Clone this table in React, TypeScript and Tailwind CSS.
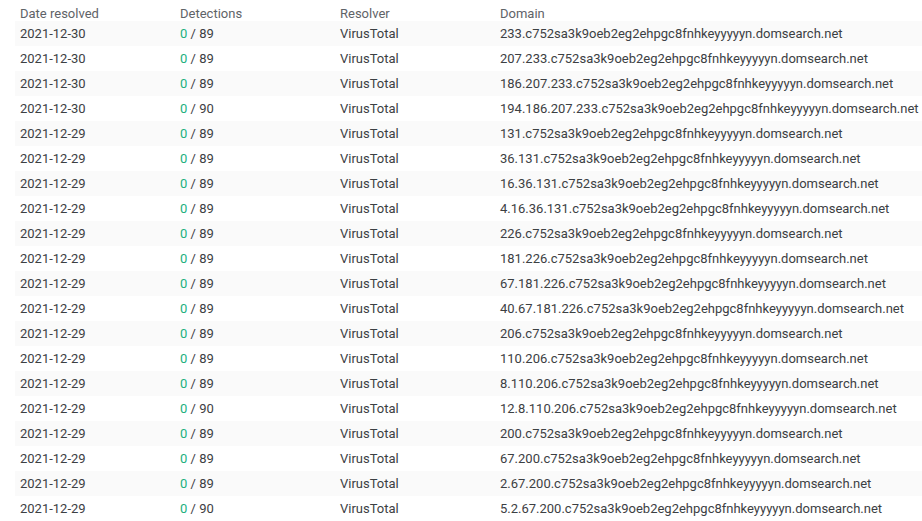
const base = "c752sa3k9oeb2eg2ehpgc8fnhkeyyyyyn.domsearch.net";

const rows: [string, number, string][] = [
  ["2021-12-30", 89, "233."],
  ["2021-12-30", 89, "207.233."],
  ["2021-12-30", 89, "186.207.233."],
  ["2021-12-30", 90, "194.186.207.233."],
  ["2021-12-29", 89, "131."],
  ["2021-12-29", 89, "36.131."],
  ["2021-12-29", 89, "16.36.131."],
  ["2021-12-29", 89, "4.16.36.131."],
  ["2021-12-29", 89, "226."],
  ["2021-12-29", 89, "181.226."],
  ["2021-12-29", 89, "67.181.226."],
  ["2021-12-29", 89, "40.67.181.226."],
  ["2021-12-29", 89, "206."],
  ["2021-12-29", 89, "110.206."],
  ["2021-12-29", 89, "8.110.206."],
  ["2021-12-29", 90, "12.8.110.206."],
  ["2021-12-29", 89, "200."],
  ["2021-12-29", 89, "67.200."],
  ["2021-12-29", 89, "2.67.200."],
  ["2021-12-29", 90, "5.2.67.200."],
];

export default function App() {
  return (
    <div className="w-[922px] h-[521px] overflow-hidden bg-white pl-[15px] font-['Roboto',sans-serif] text-[13px]">
      <div className="grid grid-cols-[160px_160px_160px_1fr] h-[21px] items-end pl-[5px] leading-[15px] text-[#5f6368]">
        <div>Date resolved</div>
        <div>Detections</div>
        <div>Resolver</div>
        <div>Domain</div>
      </div>
      {rows.map(([date, total, prefix], i) => (
        <div
          key={i}
          className={
            "grid grid-cols-[160px_160px_160px_1fr] h-[25px] items-center pl-[5px] text-[#3c4043] whitespace-nowrap " +
            (i % 2 === 0 ? "bg-[#fafafa]" : "bg-white")
          }
        >
          <div>{date}</div>
          <div>
            <span className="text-[#20b07e]">0</span> / {total}
          </div>
          <div>VirusTotal</div>
          <div>{prefix + base}</div>
        </div>
      ))}
    </div>
  );
}
